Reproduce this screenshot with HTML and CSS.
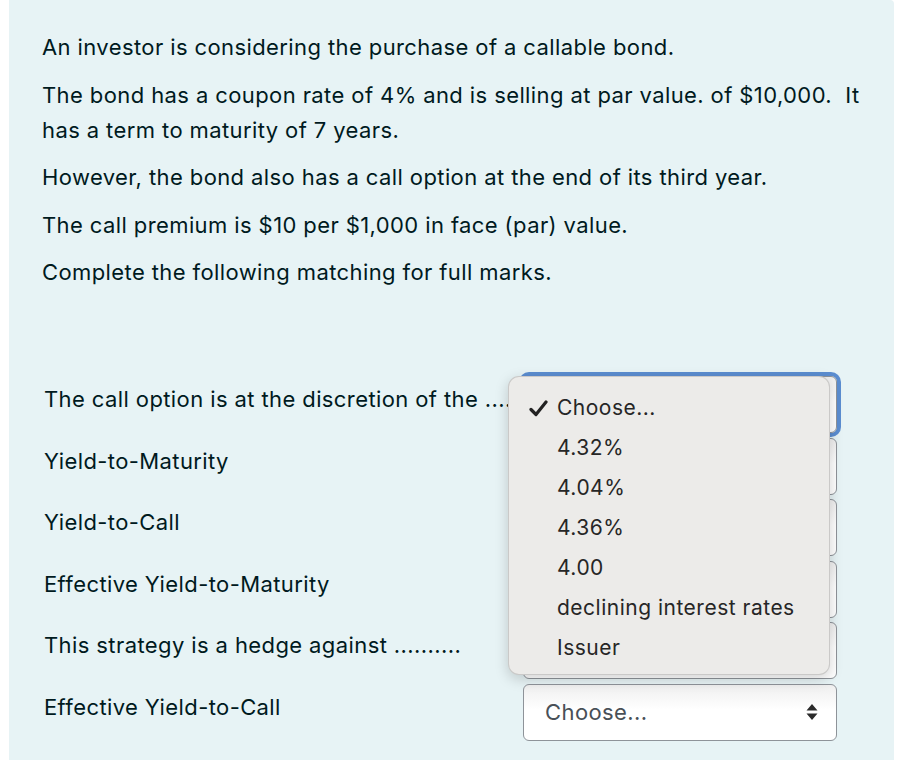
FILE: index.html
```html
<!DOCTYPE html>
<html lang="en">
<head>
  <meta charset="UTF-8">
  <meta name="viewport" content="width=device-width, initial-scale=1.0">
  <title>Callable bond question</title>
  <link rel="stylesheet" href="styles.css">
</head>
<body>

  <div class="formulation">
    <!-- Question text -->
    <div class="qtext">
      <p>An investor is considering the purchase of a callable bond.</p>
      <p>The bond has a coupon rate of 4% and is selling at par value. of $10,000.&nbsp; It has a term to maturity of 7 years.</p>
      <p>However, the bond also has a call option at the end of its third year.</p>
      <p>The call premium is $10 per $1,000 in face (par) value.</p>
      <p>Complete the following matching for full marks.</p>
    </div>

    <!-- Matching rows -->
    <div class="answer">
      <div class="label">The call option is at the discretion of the ......</div>
      <div class="select focused">
        <span>Choose...</span>
        <svg class="arrows" width="12" height="18" viewBox="0 0 12 18"><path d="M6 1 L11.5 7.5 H0.5 Z M6 17 L11.5 10.5 H0.5 Z" fill="#2b2b2b"/></svg>
      </div>

      <div class="label">Yield-to-Maturity</div>
      <div class="select">
        <span>Choose...</span>
        <svg class="arrows" width="12" height="18" viewBox="0 0 12 18"><path d="M6 1 L11.5 7.5 H0.5 Z M6 17 L11.5 10.5 H0.5 Z" fill="#2b2b2b"/></svg>
      </div>

      <div class="label">Yield-to-Call</div>
      <div class="select">
        <span>Choose...</span>
        <svg class="arrows" width="12" height="18" viewBox="0 0 12 18"><path d="M6 1 L11.5 7.5 H0.5 Z M6 17 L11.5 10.5 H0.5 Z" fill="#2b2b2b"/></svg>
      </div>

      <div class="label">Effective Yield-to-Maturity</div>
      <div class="select">
        <span>Choose...</span>
        <svg class="arrows" width="12" height="18" viewBox="0 0 12 18"><path d="M6 1 L11.5 7.5 H0.5 Z M6 17 L11.5 10.5 H0.5 Z" fill="#2b2b2b"/></svg>
      </div>

      <div class="label">This strategy is a hedge against ..........</div>
      <div class="select">
        <span>Choose...</span>
        <svg class="arrows" width="12" height="18" viewBox="0 0 12 18"><path d="M6 1 L11.5 7.5 H0.5 Z M6 17 L11.5 10.5 H0.5 Z" fill="#2b2b2b"/></svg>
      </div>

      <div class="label">Effective Yield-to-Call</div>
      <div class="select">
        <span>Choose...</span>
        <svg class="arrows" width="12" height="18" viewBox="0 0 12 18"><path d="M6 1 L11.5 7.5 H0.5 Z M6 17 L11.5 10.5 H0.5 Z" fill="#2b2b2b"/></svg>
      </div>

      <!-- Open dropdown menu of the first select -->
      <ul class="menu">
        <li class="checked">
          <svg class="check" width="19" height="17" viewBox="0 0 19 17"><path d="M2 9.5 L7 14.5 L17 2" fill="none" stroke="#222" stroke-width="3.2" stroke-linecap="round" stroke-linejoin="round"/></svg>
          Choose...
        </li>
        <li>4.32%</li>
        <li>4.04%</li>
        <li>4.36%</li>
        <li>4.00</li>
        <li>declining interest rates</li>
        <li>Issuer</li>
      </ul>
    </div>
  </div>

</body>
</html>
```

FILE: styles.css
```css
/* Page */
body {
  margin: 0;
  background-color: #fff;
  font-family: Inter, "Noto Sans", sans-serif;
  color: #001a1e;
}

/* Question box */
.formulation {
  width: 819px;
  margin-left: 9px;
  padding: 30px 33px 60px;
  background-color: #e7f3f5;
  border-radius: 0 4px 0 0;
}

.qtext p {
  margin: 0 0 12.5px;
  font-size: 22px;
  letter-spacing: 0.4px;
  line-height: 35px;
}

/* Matching rows */
.answer {
  position: relative;
  display: grid;
  grid-template-columns: 481px 314px;
  grid-auto-rows: 57px;
  row-gap: 4.5px;
  margin-top: 86px;
}

.label {
  padding: 6px 0 0 2px;
  font-size: 22px;
  letter-spacing: 0.4px;
  line-height: 35px;
  white-space: nowrap;
  overflow: hidden;
}

.select {
  display: flex;
  align-items: center;
  justify-content: space-between;
  padding: 0 18px 0 21px;
  border: 1px solid #8e9399;
  border-radius: 6px;
  background: linear-gradient(#efefef, #fff 45%);
  font-size: 22px;
  letter-spacing: 0.4px;
  color: #495057;
  box-sizing: border-box;
}

.select.focused {
  box-shadow: 0 0 0 4px #5b8dd0;
}

/* Native-looking popup */
.menu {
  position: absolute;
  left: 466px;
  top: 0;
  width: 322px;
  height: 299px;
  margin: 0;
  padding: 11px 0 8px;
  list-style: none;
  background-color: #ecebe9;
  border: 1px solid rgba(0, 0, 0, 0.14);
  border-radius: 11px;
  box-shadow: 0 4px 14px rgba(0, 0, 0, 0.18);
  box-sizing: border-box;
}

.menu li {
  position: relative;
  height: 40px;
  padding-left: 48px;
  font-size: 21px;
  letter-spacing: 0.5px;
  line-height: 40px;
  color: #262626;
}

.menu .check {
  position: absolute;
  left: 20px;
  top: 12px;
}
```
